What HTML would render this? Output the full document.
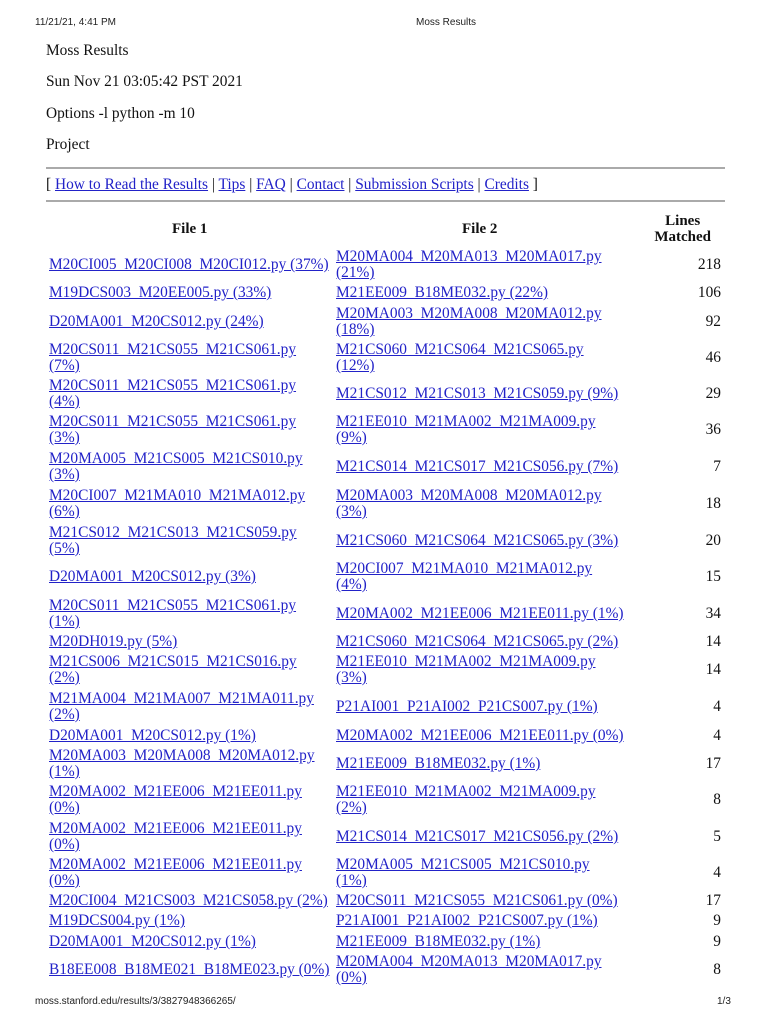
<!DOCTYPE html>
<html><head><meta charset="utf-8"><style>
body{margin:0;width:768px;height:1024px;background:#fff;position:relative;overflow:hidden;font-family:"Liberation Serif",serif;color:#111}
.s{position:absolute;font-family:"Liberation Sans",sans-serif;font-size:10px;color:#222;line-height:12px}
.t{position:absolute;left:46px;font-size:15.4px;line-height:16px;white-space:nowrap}
.hr{position:absolute;left:46px;width:679px;height:2px;background:#aaa}
a{color:#2222c8;text-decoration:underline}
.r{position:absolute;left:0;width:768px;height:36px;display:flex;align-items:center;font-size:15.4px;line-height:16px;white-space:nowrap}
.c1{position:absolute;left:49px}
.c2{position:absolute;left:336px}
.c3{position:absolute;right:47px;text-align:right}
.h{font-weight:bold;font-size:15px}
#w{position:absolute;left:0;top:1px;width:768px;height:1024px}
</style></head><body>
<div class="s" style="left:35px;top:17px">11/21/21, 4:41 PM</div>
<div class="s" style="left:416px;top:17px">Moss Results</div>
<div id="w">
<div class="t" style="top:42px">Moss Results</div>
<div class="t" style="top:73px">Sun Nov 21 03:05:42 PST 2021</div>
<div class="t" style="top:105px">Options -l python -m 10</div>
<div class="t" style="top:136px">Project</div>
<div class="hr" style="top:166px"></div>
<div class="t" style="top:176px">[ <a>How to Read the Results</a> | <a>Tips</a> | <a>FAQ</a> | <a>Contact</a> | <a>Submission Scripts</a> | <a>Credits</a> ]</div>
<div class="hr" style="top:199px"></div>
<div class="r h" style="top:210px"><span class="c1" style="left:172px">File 1</span><span class="c2" style="left:462px">File 2</span><span class="c3" style="right:57px;text-align:center">Lines<br>Matched</span></div>

<div class="r" style="top:246px"><span class="c1"><a>M20CI005_M20CI008_M20CI012.py (37%)</a></span><span class="c2"><a>M20MA004_M20MA013_M20MA017.py<br>(21%)</a></span><span class="c3">218</span></div>
<div class="r" style="top:274px"><span class="c1"><a>M19DCS003_M20EE005.py (33%)</a></span><span class="c2"><a>M21EE009_B18ME032.py (22%)</a></span><span class="c3">106</span></div>
<div class="r" style="top:303px"><span class="c1"><a>D20MA001_M20CS012.py (24%)</a></span><span class="c2"><a>M20MA003_M20MA008_M20MA012.py<br>(18%)</a></span><span class="c3">92</span></div>
<div class="r" style="top:339px"><span class="c1"><a>M20CS011_M21CS055_M21CS061.py<br>(7%)</a></span><span class="c2"><a>M21CS060_M21CS064_M21CS065.py<br>(12%)</a></span><span class="c3">46</span></div>
<div class="r" style="top:375px"><span class="c1"><a>M20CS011_M21CS055_M21CS061.py<br>(4%)</a></span><span class="c2"><a>M21CS012_M21CS013_M21CS059.py (9%)</a></span><span class="c3">29</span></div>
<div class="r" style="top:411px"><span class="c1"><a>M20CS011_M21CS055_M21CS061.py<br>(3%)</a></span><span class="c2"><a>M21EE010_M21MA002_M21MA009.py<br>(9%)</a></span><span class="c3">36</span></div>
<div class="r" style="top:448px"><span class="c1"><a>M20MA005_M21CS005_M21CS010.py<br>(3%)</a></span><span class="c2"><a>M21CS014_M21CS017_M21CS056.py (7%)</a></span><span class="c3">7</span></div>
<div class="r" style="top:485px"><span class="c1"><a>M20CI007_M21MA010_M21MA012.py<br>(6%)</a></span><span class="c2"><a>M20MA003_M20MA008_M20MA012.py<br>(3%)</a></span><span class="c3">18</span></div>
<div class="r" style="top:522px"><span class="c1"><a>M21CS012_M21CS013_M21CS059.py<br>(5%)</a></span><span class="c2"><a>M21CS060_M21CS064_M21CS065.py (3%)</a></span><span class="c3">20</span></div>
<div class="r" style="top:558px"><span class="c1"><a>D20MA001_M20CS012.py (3%)</a></span><span class="c2"><a>M20CI007_M21MA010_M21MA012.py<br>(4%)</a></span><span class="c3">15</span></div>
<div class="r" style="top:595px"><span class="c1"><a>M20CS011_M21CS055_M21CS061.py<br>(1%)</a></span><span class="c2"><a>M20MA002_M21EE006_M21EE011.py (1%)</a></span><span class="c3">34</span></div>
<div class="r" style="top:623px"><span class="c1"><a>M20DH019.py (5%)</a></span><span class="c2"><a>M21CS060_M21CS064_M21CS065.py (2%)</a></span><span class="c3">14</span></div>
<div class="r" style="top:651px"><span class="c1"><a>M21CS006_M21CS015_M21CS016.py<br>(2%)</a></span><span class="c2"><a>M21EE010_M21MA002_M21MA009.py<br>(3%)</a></span><span class="c3">14</span></div>
<div class="r" style="top:688px"><span class="c1"><a>M21MA004_M21MA007_M21MA011.py<br>(2%)</a></span><span class="c2"><a>P21AI001_P21AI002_P21CS007.py (1%)</a></span><span class="c3">4</span></div>
<div class="r" style="top:717px"><span class="c1"><a>D20MA001_M20CS012.py (1%)</a></span><span class="c2"><a>M20MA002_M21EE006_M21EE011.py (0%)</a></span><span class="c3">4</span></div>
<div class="r" style="top:745px"><span class="c1"><a>M20MA003_M20MA008_M20MA012.py<br>(1%)</a></span><span class="c2"><a>M21EE009_B18ME032.py (1%)</a></span><span class="c3">17</span></div>
<div class="r" style="top:781px"><span class="c1"><a>M20MA002_M21EE006_M21EE011.py<br>(0%)</a></span><span class="c2"><a>M21EE010_M21MA002_M21MA009.py<br>(2%)</a></span><span class="c3">8</span></div>
<div class="r" style="top:818px"><span class="c1"><a>M20MA002_M21EE006_M21EE011.py<br>(0%)</a></span><span class="c2"><a>M21CS014_M21CS017_M21CS056.py (2%)</a></span><span class="c3">5</span></div>
<div class="r" style="top:854px"><span class="c1"><a>M20MA002_M21EE006_M21EE011.py<br>(0%)</a></span><span class="c2"><a>M20MA005_M21CS005_M21CS010.py<br>(1%)</a></span><span class="c3">4</span></div>
<div class="r" style="top:882px"><span class="c1"><a>M20CI004_M21CS003_M21CS058.py (2%)</a></span><span class="c2"><a>M20CS011_M21CS055_M21CS061.py (0%)</a></span><span class="c3">17</span></div>
<div class="r" style="top:902px"><span class="c1"><a>M19DCS004.py (1%)</a></span><span class="c2"><a>P21AI001_P21AI002_P21CS007.py (1%)</a></span><span class="c3">9</span></div>
<div class="r" style="top:923px"><span class="c1"><a>D20MA001_M20CS012.py (1%)</a></span><span class="c2"><a>M21EE009_B18ME032.py (1%)</a></span><span class="c3">9</span></div>
<div class="r" style="top:951px"><span class="c1"><a>B18EE008_B18ME021_B18ME023.py (0%)</a></span><span class="c2"><a>M20MA004_M20MA013_M20MA017.py<br>(0%)</a></span><span class="c3">8</span></div>
</div>
<div class="s" style="left:35px;top:996px">moss.stanford.edu/results/3/3827948366265/</div>
<div class="s" style="left:717px;top:996px">1/3</div>
</body></html>
